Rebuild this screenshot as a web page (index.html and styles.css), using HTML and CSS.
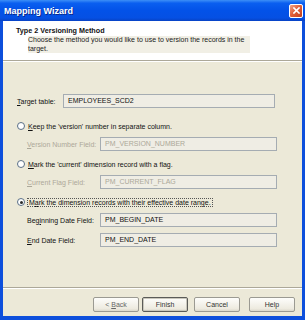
FILE: index.html
```html
<!DOCTYPE html>
<html lang="en">
<head>
  <meta charset="UTF-8" />
  <title>Mapping Wizard</title>
  <link rel="stylesheet" href="styles.css">
</head>
<body>
  <div class="window">
    <div class="titlebar">
      <span class="title">Mapping Wizard</span>
      <span class="close">
        <svg width="7" height="7" viewBox="0 0 7 7"><path d="M1 1 L6 6 M6 1 L1 6" stroke="#fff" stroke-width="1.6" stroke-linecap="square"/></svg>
      </span>
    </div>
    <div class="frame">
      <div class="header">
        <div class="header-title">Type 2 Versioning Method</div>
        <div class="header-desc">Choose the method you would like to use to version the records in the target.</div>
      </div>

      <div class="content">
        <div class="row target">
          <span class="label"><u>T</u>arget table:</span>
          <div class="field wide">EMPLOYEES_SCD2</div>
        </div>

        <div class="option">
          <span class="radio"></span>
          <span><u>K</u>eep the 'version' number in separate column.</span>
        </div>
        <div class="row sub disabled">
          <span class="label"><u>V</u>ersion Number Field:</span>
          <div class="field">PM_VERSION_NUMBER</div>
        </div>

        <div class="option">
          <span class="radio"></span>
          <span><u>M</u>ark the 'current' dimension record with a flag.</span>
        </div>
        <div class="row sub disabled">
          <span class="label"><u>C</u>urrent Flag Field:</span>
          <div class="field">PM_CURRENT_FLAG</div>
        </div>

        <div class="option">
          <span class="radio checked"></span>
          <span class="focus">M<u>a</u>rk the dimension records with their effective date range.</span>
        </div>
        <div class="row sub">
          <span class="label">Beg<u>i</u>nning Date Field:</span>
          <div class="field">PM_BEGIN_DATE</div>
        </div>
        <div class="row sub">
          <span class="label"><u>E</u>nd Date Field:</span>
          <div class="field">PM_END_DATE</div>
        </div>
      </div>

      <div class="footer">
        <button class="btn back">&lt; <u>B</u>ack</button>
        <button class="btn default">Finish</button>
        <button class="btn cancel">Cancel</button>
        <button class="btn help">Help</button>
      </div>
    </div>
  </div>
</body>
</html>
```

FILE: styles.css
```css
body {
  margin: 0;
  font-family: "Liberation Sans", Arial, sans-serif;
  font-size: 7px;
  color: #111;
}
.window {
  width: 305px;
  height: 320px;
  display: flex;
  flex-direction: column;
  background: #0d4fdc;
}
.titlebar {
  height: 21px;
  display: flex;
  align-items: center;
  padding: 0 2px 0 4px;
  background: linear-gradient(#3d8ff7 0%, #0a5ff0 15%, #0352e8 50%, #0550e4 85%, #0842c4 100%);
  box-sizing: border-box;
}
.title {
  color: #fff;
  font-weight: bold;
  font-size: 9px;
  text-shadow: 1px 1px 0 #0b2a8c;
}
.close {
  margin-left: auto;
  width: 14px;
  height: 14px;
  box-sizing: border-box;
  border: 1px solid #fff;
  border-radius: 2px;
  background: linear-gradient(135deg, #f0a58a 0%, #e0603b 45%, #c2401c 100%);
  display: flex;
  align-items: center;
  justify-content: center;
}
.frame {
  flex: 1;
  display: flex;
  flex-direction: column;
  margin: 0 3px 4px 3px;
  background: #ece9d8;
}
.header {
  height: 40px;
  background: #fff;
  border-bottom: 1px solid #aca899;
  box-sizing: border-box;
  padding: 5px 0 0 13px;
}
.header-title {
  font-weight: bold;
  font-size: 7.2px;
  line-height: 9px;
}
.header-desc {
  margin: 1px 0 0 12px;
  width: 222px;
  background: #f1efe5;
  color: #222;
  line-height: 8.5px;
}
.content {
  flex: 1;
  padding: 32px 0 0 14px;
  border-top: 1px solid #fff;
}
.row {
  display: flex;
  align-items: center;
  height: 14px;
}
.label {
  width: 46px;
}
.sub {
  padding-left: 10px;
  margin-top: 6px;
}
.sub .label {
  width: 73px;
}
.field {
  width: 177px;
  height: 14px;
  box-sizing: border-box;
  border: 1px solid #a5acb2;
  background: #efede4;
  padding-left: 4px;
  line-height: 12px;
}
.field.wide {
  width: 212px;
}
.disabled {
  color: #aca899;
}
.target {
  margin-bottom: 13px;
}
.option {
  display: flex;
  align-items: center;
  height: 10px;
  margin-top: 8px;
}
.target + .option {
  margin-top: 0;
}
.radio {
  width: 6px;
  height: 6px;
  border: 1px solid #5a6f86;
  border-radius: 50%;
  background: #fff;
  margin-right: 3px;
  display: flex;
  align-items: center;
  justify-content: center;
}
.radio.checked::after {
  content: "";
  width: 3px;
  height: 3px;
  border-radius: 50%;
  background: #2a2a2a;
}
.focus {
  outline: 1px dotted #555;
  padding: 0 1px;
}
.footer {
  height: 29px;
  border-top: 1px solid #aca899;
  box-shadow: inset 0 1px 0 #fff;
  display: flex;
  align-items: flex-start;
  padding: 9px 0 0 90px;
  box-sizing: border-box;
}
.btn {
  width: 46px;
  height: 15px;
  padding: 0;
  font-family: "Liberation Sans", Arial, sans-serif;
  font-size: 7px;
  color: #333;
  border: 1px solid #9b9a92;
  border-radius: 2px;
  background: linear-gradient(#fdfdfb, #eeebe0 80%, #dcd9cc);
}
.btn.default {
  border: 1px solid #5b5b58;
  box-shadow: inset 0 0 0 1px #c9c7bc;
  margin-left: 3px;
}
.btn.cancel {
  margin-left: 6px;
}
.btn.help {
  margin-left: 9px;
}
.btn.back {
  color: #666;
}
```
